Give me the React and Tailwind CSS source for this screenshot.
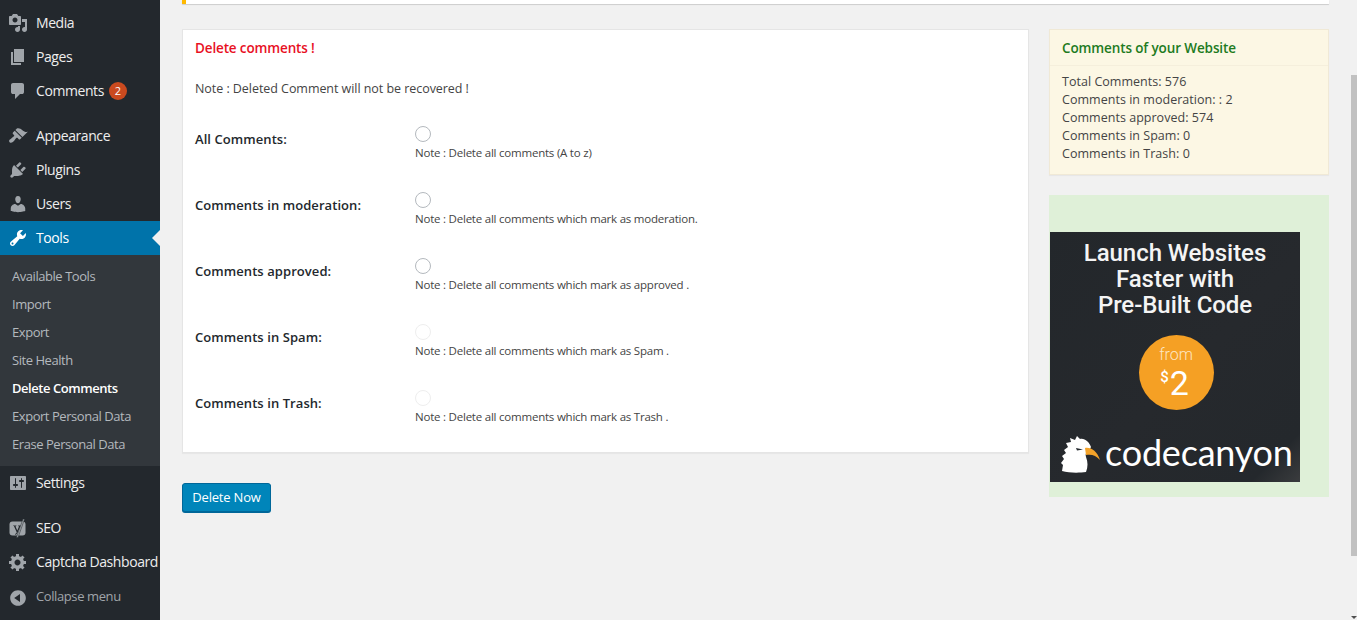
import React from 'react';

// dashicons paths, 20x20 box
const ICONS = {
  media: 'M13 11V4c0-.55-.45-1-1-1h-1.67L9 1H5L3.67 3H2c-.55 0-1 .45-1 1v7c0 .55.45 1 1 1h10c.55 0 1-.45 1-1zM7 4.5c1.38 0 2.5 1.12 2.5 2.5S8.38 9.5 7 9.5 4.5 8.38 4.5 7 5.62 4.5 7 4.5zM14 6h5v10.5c0 1.38-1.12 2.5-2.5 2.5S14 17.88 14 16.5s1.12-2.5 2.5-2.5c.17 0 .34.02.5.05V9h-3V6zm-4 8.05V13h2v3.5c0 1.38-1.12 2.5-2.5 2.5S7 17.88 7 16.5 8.12 14 9.5 14c.17 0 .34.02.5.05z',
  pages: 'M6 15V2h10v13H6zm-1 1h8v2H3V5h2v11z',
  comments: 'M5 2h9q.82 0 1.41.59T16 4v7q0 .82-.59 1.41T14 13h-2l-5 5v-5H5q-.82 0-1.41-.59T3 11V4q0-.82.59-1.41T5 2z',
  appearance: 'M14.48 11.06L7.41 3.99l1.5-1.5c.5-.56 2.3-.47 3.51.32 1.21.8 1.43 1.28 2.91 2.1 1.18.64 2.45 1.26 4.45.85zm-.71.71L6.7 4.7 4.93 6.47c-.39.39-.39 1.02 0 1.41l1.06 1.06c.39.39.39 1.03 0 1.42-.6.6-1.43 1.11-2.21 1.69-.35.26-.7.53-1.01.84C1.43 13.23.4 14.98 1.6 16.18s3.02.47 4.11-.85c.32-.31.59-.66.85-1.01.58-.78 1.09-1.61 1.69-2.21.39-.39 1.03-.39 1.42 0l1.06 1.06c.39.39 1.02.39 1.41 0z',
  plugins: 'M13.11 4.36L9.87 7.6 8 5.73l3.24-3.24c.35-.34 1.05-.2 1.56.32.52.51.66 1.21.31 1.55zm-8 1.77l.91-1.12 9.01 9.01-1.19.84c-.71.71-2.63 1.16-3.82 1.16H6.14L4.9 17.26c-.59.59-1.54.59-2.12 0-.59-.58-.59-1.53 0-2.12l1.24-1.24v-3.88c0-1.13.4-3.19 1.09-3.89zm7.26 3.97l3.24-3.24c.34-.35 1.04-.21 1.55.31.52.51.66 1.21.31 1.55l-3.24 3.25z',
  users: 'M10 9.25c-2.27 0-2.73-3.44-2.73-3.44C7 4.02 7.82 2 9.97 2c2.16 0 2.98 2.02 2.71 3.81 0 0-.41 3.44-2.68 3.44zm0 2.57L12.72 10c2.39 0 4.52 2.33 4.52 4.53v2.49s-3.65 1.13-7.24 1.13c-3.65 0-7.24-1.13-7.24-1.13v-2.49c0-2.25 1.94-4.48 4.47-4.48z',
  tools: 'M16.68 9.77c-1.34 1.34-3.3 1.67-4.95.99l-5.41 6.52c-.99.99-2.59.99-3.58 0s-.99-2.59 0-3.57l6.52-5.42c-.68-1.65-.35-3.61.99-4.95 1.28-1.28 3.12-1.62 4.72-1.06l-2.89 2.89 2.82 2.82 2.86-2.87c.53 1.58.18 3.39-1.08 4.67zM3.81 16.21c.4.39 1.04.39 1.43 0 .4-.4.4-1.04 0-1.43-.39-.4-1.03-.4-1.43 0-.39.39-.39 1.03 0 1.43z',
  settings: 'M18 16V4c0-.55-.45-1-1-1H3c-.55 0-1 .45-1 1v12c0 .55.45 1 1 1h14c.55 0 1-.45 1-1zM8 11h1c.55 0 1 .45 1 1s-.45 1-1 1H8v1.5c0 .28-.22.5-.5.5s-.5-.22-.5-.5V13H6c-.55 0-1-.45-1-1s.45-1 1-1h1V5.5c0-.28.22-.5.5-.5s.5.22.5.5V11zm5-2h-1c-.55 0-1-.45-1-1s.45-1 1-1h1V5.5c0-.28.22-.5.5-.5s.5.22.5.5V7h1c.55 0 1 .45 1 1s-.45 1-1 1h-1v5.5c0 .28-.22.5-.5.5s-.5-.22-.5-.5V9z',
  gear: 'M18 12h-2.18c-.17.7-.44 1.35-.81 1.93l1.54 1.54-2.1 2.1-1.54-1.54c-.58.36-1.23.63-1.91.79V19H8v-2.18c-.68-.16-1.33-.43-1.91-.79l-1.54 1.54-2.12-2.12 1.54-1.54c-.36-.58-.63-1.23-.79-1.91H1V9.03h2.17c.16-.7.44-1.35.8-1.94L2.43 5.55l2.1-2.1 1.54 1.54c.58-.37 1.24-.64 1.93-.81V2h3v2.18c.68.16 1.33.43 1.91.79l1.54-1.54 2.12 2.12-1.54 1.54c.36.59.64 1.24.8 1.94H18V12zm-8.5 1.5c1.66 0 3-1.34 3-3s-1.34-3-3-3-3 1.34-3 3 1.34 3 3 3z',
  collapse: 'M10 2.16c4.33 0 7.84 3.51 7.84 7.84s-3.51 7.84-7.84 7.84S2.16 14.33 2.16 10 5.71 2.16 10 2.16zm2 11.72V6.12L6.18 9.97z',
};

const YoastIcon = ({ className }) => (
  <svg viewBox="0 0 20 20" className={className}>
    <rect x="1.5" y="3.5" width="16" height="14" rx="3" fill="#a0a5aa" />
    <path d="M5 7.5h3.4v.6l-.9.3 1.8 4.2 1.7-4.2-.9-.3v-.6h3v.6l-.8.3-2.6 6.2c-.5 1.2-1.2 1.9-2.5 2.2l-.2-.7c.8-.3 1.4-.8 1.7-1.7l-.1-.4-2.7-6-.9-.3z" fill="#23282d" />
    <path d="M15 1h1.6L10 19.5H8.4z" fill="#a0a5aa" stroke="#23282d" strokeWidth="0.5" />
  </svg>
);

const Dashicon = ({ name, className }) =>
  name === 'seo' ? (
    <YoastIcon className={className} />
  ) : (
    <svg viewBox="0 0 20 20" fill="currentColor" className={className}>
      <path d={ICONS[name]} />
    </svg>
  );

const MenuItem = ({ icon, label, badge, active, muted, mt }) => (
  <div className={`flex h-[34px] items-center pl-[8px] ${mt || ''} ${active ? 'relative bg-[#0073aa] text-white' : muted ? 'text-[#a0a5aa]' : 'text-[#eee]'}`}>
    <Dashicon name={icon} className={`-mt-[1px] h-[20px] w-[20px] shrink-0 ${active ? 'text-white' : 'text-[#a0a5aa]'}`} />
    <span className={`ml-[8px] -mt-[2px] whitespace-nowrap ${muted ? 'text-[13px] tracking-[-0.4px]' : 'text-[14px] tracking-[-0.42px]'}`}>{label}</span>
    {badge && (
      <span className="ml-[5px] flex h-[18px] w-[18px] items-center justify-center rounded-full bg-[#ca4a1f] text-[11px] text-white">{badge}</span>
    )}
    {active && <span className="absolute right-0 top-[9px] h-0 w-0 border-y-[8px] border-r-[8px] border-y-transparent border-r-[#f1f1f1]" />}
  </div>
);

const SUBMENU = ['Available Tools', 'Import', 'Export', 'Site Health', 'Delete Comments', 'Export Personal Data', 'Erase Personal Data'];

const Sidebar = () => (
  <aside className="flex h-[620px] w-[160px] shrink-0 flex-col bg-[#23282d] pt-[6px]">
    <MenuItem icon="media" label="Media" />
    <MenuItem icon="pages" label="Pages" />
    <MenuItem icon="comments" label="Comments" badge="2" />
    <MenuItem icon="appearance" label="Appearance" mt="mt-[11px]" />
    <MenuItem icon="plugins" label="Plugins" />
    <MenuItem icon="users" label="Users" />
    <MenuItem icon="tools" label="Tools" active />
    <div className="flex flex-col bg-[#32373c] pb-[7px] pt-[8px]">
      {SUBMENU.map(item => (
        <div
          key={item}
          className={`flex h-[28px] items-center pl-[12px] text-[13px] tracking-[-0.45px] ${item === 'Delete Comments' ? 'font-semibold text-white' : 'text-[#b4b9be]'}`}
        >
          {item}
        </div>
      ))}
    </div>
    <MenuItem icon="settings" label="Settings" />
    <MenuItem icon="seo" label="SEO" mt="mt-[11px]" />
    <MenuItem icon="gear" label="Captcha Dashboard" />
    <MenuItem icon="collapse" label="Collapse menu" muted mt="mt-[2px]" />
  </aside>
);

const OPTIONS = [
  { label: 'All Comments:', note: 'Note : Delete all comments (A to z)' },
  { label: 'Comments in moderation:', note: 'Note : Delete all comments which mark as moderation.' },
  { label: 'Comments approved:', note: 'Note : Delete all comments which mark as approved .' },
  { label: 'Comments in Spam:', note: 'Note : Delete all comments which mark as Spam .', disabled: true },
  { label: 'Comments in Trash:', note: 'Note : Delete all comments which mark as Trash .', disabled: true },
];

const OptionRow = ({ label, note, disabled }) => (
  <div className="flex h-[66px]">
    <div className="w-[220px] shrink-0 pt-[4px] text-[13px] font-semibold leading-[18px] tracking-[0.07px] text-[#23282d]">{label}</div>
    <div>
      <div className={`h-[16px] w-[16px] rounded-full border bg-white ${disabled ? 'border-[#eeeeee]' : 'border-[#b4b9be]'}`} />
      <p className="mt-[2px] text-[11.5px] leading-[18px] tracking-[-0.22px] text-[#444]">{note}</p>
    </div>
  </div>
);

const STATS = [
  ['Total Comments:', '576'],
  ['Comments in moderation: :', '2'],
  ['Comments approved:', '574'],
  ['Comments in Spam:', '0'],
  ['Comments in Trash:', '0'],
];

const StatsBox = () => (
  <div className="border border-[#f0e9d6] bg-[#fcf7e4] shadow-[0_1px_1px_rgba(0,0,0,0.04)]">
    <h3 className="border-b border-[#f5efdc] px-[12px] pb-[7px] pt-[9px] text-[13.5px] font-semibold leading-[19px] tracking-[-0.12px] text-[#1e7b1e]">Comments of your Website</h3>
    <div className="px-[12px] pb-[11px] pt-[7px] text-[12.5px] leading-[18px] tracking-[0.03px] text-[#444]">
      {STATS.map(([name, value]) => (
        <div key={name}>{name} {value}</div>
      ))}
    </div>
  </div>
);

const Eagle = () => (
  <svg viewBox="0 0 42 38" className="h-[38px] w-[42px] shrink-0">
    <path d="M3 36 L4 30 L2 28 L5 24 L3 21 L7 18 L5 15 L9 12 L7 8 L12 7 L11 3 L16 5 L18 1 L21 4 C26 3 30 7 32 12 L30 16 C27 17 26 19 27 22 C29 27 29 32 27 37 C20 38 10 38 3 36Z" fill="#fff" />
    <path d="M26 13 C32 12 38 16 41 25 C37 20 32 19 27 20Z" fill="#f4a32a" />
    <path d="M17 13 L24 14.5 L18 15.5Z" fill="#23282d" />
  </svg>
);

const AdBanner = () => (
  <div className="flex h-[250px] w-[250px] flex-col items-center bg-[linear-gradient(135deg,#23272b_0%,#26292d_55%,#24282c_90%,#3a3c3e_100%)] font-['Roboto',sans-serif] text-white">
    <div className="mt-[8px] text-center text-[24px] font-medium leading-[26px] tracking-[-0.05px] text-[#f4f4f4]">
      <div>Launch Websites</div>
      <div>Faster with</div>
      <div>Pre-Built Code</div>
    </div>
    <div className="ml-[2px] mt-[17px] flex h-[75px] w-[75px] flex-col items-center rounded-full bg-[#f5a024]">
      <span className="mt-[12px] text-[16px] font-light leading-[16px] text-[#fde6c2]">from</span>
      <span className="-ml-[3px] mt-[1px] flex items-start">
        <span className="mt-[5px] text-[15px] font-medium leading-[17px]">$</span>
        <span className="ml-[1px] text-[34px] leading-[38px]">2</span>
      </span>
    </div>
    <div className="mb-[9px] mt-auto flex w-full items-center pl-[9px]">
      <Eagle />
      <span className="-mt-[5px] ml-[4px] font-['Lato',sans-serif] text-[36px] leading-[38px] tracking-[-0.2px]">codecanyon</span>
    </div>
  </div>
);

export default function App() {
  return (
    <div className="flex h-[620px] overflow-hidden bg-[#f1f1f1] font-['Open_Sans',sans-serif]">
      <Sidebar />
      <main className="min-w-0 flex-1 pl-[22px] pr-[22px]">
        <div className="h-[4px] border-l-[4px] border-[#ffb900] bg-white shadow-[0_1px_1px_rgba(0,0,0,0.15)]" />
        <div className="mt-[25px] flex gap-[20px]">
          <div className="w-[847px] shrink-0">
            <section className="h-[424px] border border-[#e5e5e5] bg-white px-[12px] pt-[9px] shadow-[0_1px_1px_rgba(0,0,0,0.04)]">
              <h2 className="text-[13.5px] font-semibold leading-[19px] tracking-[-0.14px] text-[#e8101f]">Delete comments !</h2>
              <p className="mt-[22px] text-[12.5px] leading-[18px] tracking-[-0.05px] text-[#444]">Note : Deleted Comment will not be recovered !</p>
              <div className="mt-[28px]">
                {OPTIONS.map(option => <OptionRow key={option.label} {...option} />)}
              </div>
            </section>
            <button className="mt-[30px] h-[29px] w-[89px] rounded-[3px] border border-[#006799] bg-[#0085ba] text-[13px] tracking-[-0.2px] text-white shadow-[0_1px_0_#006799]">Delete Now</button>
          </div>
          <div className="w-[280px] shrink-0">
            <StatsBox />
            <div className="mt-[20px] h-[302px] bg-[#dff0d8] pl-[1px] pt-[37px]">
              <AdBanner />
            </div>
          </div>
        </div>
      </main>
      <div className="relative flex w-[6px] shrink-0 flex-col bg-[#f1f1f1] pb-[64px] pt-[75px]">
        <div className="flex-1 bg-[#c1c1c1]" />
        <span className="absolute bottom-[1px] left-0 h-0 w-0 border-x-[3px] border-t-[3px] border-x-transparent border-t-[#505050]" />
      </div>
    </div>
  );
}
